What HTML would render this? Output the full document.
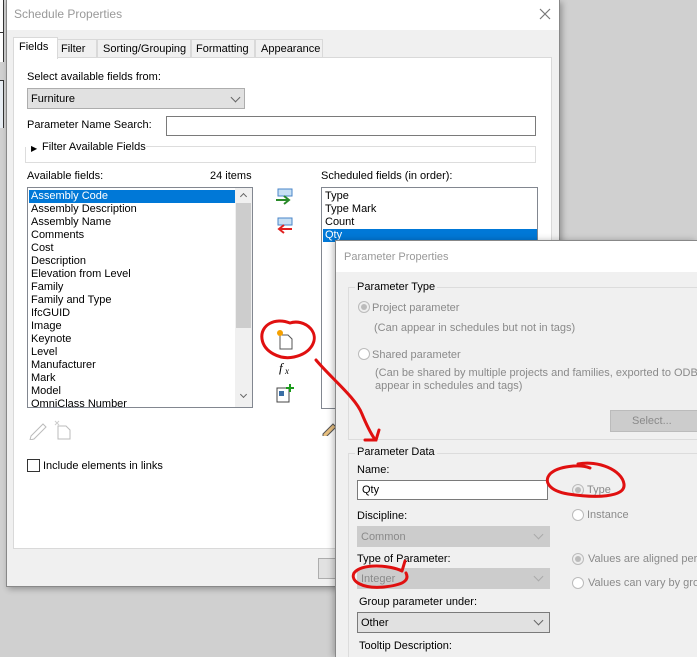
<!DOCTYPE html>
<html style="width:697px;height:657px;overflow:hidden"><head><meta charset="utf-8"><style>
*{box-sizing:border-box;margin:0;padding:0}
body{width:697px;height:657px;overflow:hidden;background:#d0d0d0;font-family:"Liberation Sans",sans-serif;font-size:11px;color:#000;position:relative}
.a{position:absolute}
.t{position:absolute;white-space:nowrap;line-height:13px}
.g{color:#8a8a8a}
.chev{position:absolute;width:7px;height:7px;border-right:1px solid #666;border-bottom:1px solid #666;transform:rotate(45deg)}
</style></head><body>
<div class="a" style="left:0;top:0;width:6px;height:657px;background:#d0d0d0"></div>
<div class="a" style="left:0;top:0;width:4px;height:32px;border-right:1px solid #333;background:#fff"></div>
<div class="a" style="left:0;top:32px;width:4px;height:30px;border-right:1px solid #333;border-top:1px solid #333;background:#fff"></div>
<div class="a" style="left:0;top:80px;width:4px;height:48px;border-right:1px solid #333;border-top:1px solid #333;background:#e8eef4"></div>
<div class="a" style="left:6px;top:0;width:554px;height:587px;background:#f0f0f0;border:1px solid #888;box-shadow:2px 2px 6px rgba(0,0,0,.3)"></div>
<div class="a" style="left:7px;top:0;width:552px;height:30px;background:#fff"></div>
<div class="t" style="left:14px;top:8px;font-size:12px;color:#999">Schedule Properties</div>
<svg class="a" style="left:539px;top:8px" width="12" height="12"><path d="M1 1l10 10M11 1L1 11" stroke="#777" stroke-width="1.2"/></svg>
<div class="a" style="left:13px;top:57px;width:539px;height:492px;background:#fff;border:1px solid #d9d9d9"></div>
<div class="a" style="left:57px;top:39px;width:40px;height:19px;border:1px solid #d9d9d9;background:#f0f0f0"></div>
<div class="t" style="left:61px;top:43px">Filter</div>
<div class="a" style="left:97px;top:39px;width:94px;height:19px;border:1px solid #d9d9d9;background:#f0f0f0"></div>
<div class="t" style="left:103px;top:43px">Sorting/Grouping</div>
<div class="a" style="left:191px;top:39px;width:64px;height:19px;border:1px solid #d9d9d9;background:#f0f0f0"></div>
<div class="t" style="left:196px;top:43px">Formatting</div>
<div class="a" style="left:255px;top:39px;width:68px;height:19px;border:1px solid #d9d9d9;background:#f0f0f0"></div>
<div class="t" style="left:261px;top:43px">Appearance</div>
<div class="a" style="left:13px;top:37px;width:45px;height:22px;border:1px solid #d9d9d9;border-bottom:none;background:#fff"></div>
<div class="t" style="left:19px;top:41px">Fields</div>
<div class="t" style="left:27px;top:71px">Select available fields from:</div>
<div class="a" style="left:27px;top:88px;width:218px;height:21px;background:#e1e1e1;border:1px solid #adadad"></div>
<div class="t" style="left:31px;top:93px">Furniture</div>
<div class="chev" style="left:232px;top:94px"></div>
<div class="t" style="left:27px;top:119px">Parameter Name Search:</div>
<div class="a" style="left:166px;top:116px;width:370px;height:20px;border:1px solid #7a7a7a;background:#fff"></div>
<div class="t" style="left:31px;top:142px;font-size:8px">▶</div>
<div class="t" style="left:42px;top:141px">Filter Available Fields</div>
<div class="a" style="left:146px;top:146px;width:390px;height:1px;background:#ddd"></div>
<div class="a" style="left:25px;top:147px;width:511px;height:16px;border:1px solid #ddd;border-top:none"></div>
<div class="t" style="left:27px;top:170px">Available fields:</div>
<div class="t" style="left:210px;top:170px">24 items</div>
<div class="a" style="left:27px;top:187px;width:226px;height:221px;border:1px solid #828790;background:#fff;overflow:hidden">
<div class="a" style="left:1px;top:2px;width:206px;height:13px;background:#0078d7"></div>
<div class="a" style="left:207px;top:0;width:17px;height:219px;background:#f0f0f0"></div>
<div class="a" style="left:208px;top:15px;width:15px;height:125px;background:#cdcdcd"></div>
<div class="chev" style="left:213px;top:6px;transform:rotate(225deg);width:5px;height:5px"></div>
<div class="chev" style="left:213px;top:204px;width:5px;height:5px"></div>
<div class="t" style="left:3px;top:2px;line-height:13px;color:#000"><span style="color:#fff">Assembly Code</span><br>Assembly Description<br>Assembly Name<br>Comments<br>Cost<br>Description<br>Elevation from Level<br>Family<br>Family and Type<br>IfcGUID<br>Image<br>Keynote<br>Level<br>Manufacturer<br>Mark<br>Model<br>OmniClass Number</div>
</div>
<div class="t" style="left:321px;top:170px">Scheduled fields (in order):</div>
<div class="a" style="left:321px;top:187px;width:217px;height:222px;border:1px solid #828790;background:#fff;overflow:hidden">
<div class="a" style="left:1px;top:41px;width:214px;height:13px;background:#0078d7"></div>
<div class="t" style="left:3px;top:2px"><span>Type</span><br>Type Mark<br>Count<br><span style="color:#fff">Qty</span></div>
</div>
<svg class="a" style="left:270px;top:185px" width="30" height="240" viewBox="0 0 30 240">
<rect x="8" y="4" width="14" height="7" fill="#c8e0f4" stroke="#4a86c8"/>
<path d="M6 15h12M14 11l5 4-5 4" stroke="#2a8a2a" stroke-width="2" fill="none"/>
<rect x="8" y="33" width="14" height="7" fill="#c8e0f4" stroke="#4a86c8"/>
<path d="M22 44h-12M14 40l-5 4 5 4" stroke="#e02020" stroke-width="2" fill="none"/>
<path d="M10 150h8l4 4v10h-12z" fill="#fff" stroke="#555"/>
<circle cx="10" cy="148" r="3" fill="#f5a000"/>
<text x="9" y="187" font-family="Liberation Serif" font-style="italic" font-size="13">f</text><text x="15" y="189" font-family="Liberation Serif" font-style="italic" font-size="9">x</text>
<rect x="7" y="203" width="12" height="14" fill="#fff" stroke="#444"/><rect x="9" y="206" width="5" height="5" fill="#3a6ea5"/>
<path d="M20 199v8M16 203h8" stroke="#1a9a1a" stroke-width="2"/>
</svg>
<svg class="a" style="left:27px;top:418px" width="50" height="22"><path d="M4 18l12-12 3 3-12 12-4 1z" fill="none" stroke="#bbb"/><path d="M31 8h8l4 4v9h-12z" fill="none" stroke="#bbb"/><path d="M28 3l4 4M32 3l-4 4" stroke="#ccc"/></svg>
<svg class="a" style="left:322px;top:420px" width="14" height="16"><path d="M1 14l10-10 3 3-10 10-3 1z" fill="#e8c080" stroke="#555"/></svg>
<div class="a" style="left:27px;top:459px;width:13px;height:13px;border:1px solid #333;background:#fff"></div>
<div class="t" style="left:43px;top:460px">Include elements in links</div>
<div class="a" style="left:318px;top:558px;width:20px;height:21px;border:1px solid #adadad;background:#e1e1e1"></div>
<div class="a" style="left:335px;top:240px;width:362px;height:417px;overflow:hidden;background:#f0f0f0;border-left:1px solid #888;border-top:1px solid #888;box-shadow:-2px 0 6px rgba(0,0,0,.25)">
<div class="a" style="left:12px;top:212px;width:400px;height:230px;border:1px solid #dcdcdc"></div>
<div class="a" style="left:12px;top:46px;width:400px;height:153px;border:1px solid #dcdcdc"></div>
</div>
<div class="a" style="left:336px;top:241px;width:361px;height:31px;background:#fff"></div>
<div class="t" style="left:344px;top:251px;color:#999">Parameter Properties</div>
<div class="t" style="left:355px;top:281px;background:#f0f0f0;padding:0 2px">Parameter Type</div>
<div class="a" style="left:358px;top:301px;width:12px;height:12px;border-radius:50%;border:1px solid #bbb;background:#eee"><div class="a" style="left:2px;top:2px;width:6px;height:6px;border-radius:50%;background:#bbb"></div></div>
<div class="t g" style="left:372px;top:302px">Project parameter</div>
<div class="t g" style="left:374px;top:322px">(Can appear in schedules but not in tags)</div>
<div class="a" style="left:358px;top:348px;width:12px;height:12px;border-radius:50%;border:1px solid #bbb;background:#fff"></div>
<div class="t g" style="left:372px;top:349px">Shared parameter</div>
<div class="t g" style="left:375px;top:367px">(Can be shared by multiple projects and families, exported to ODBC<br>appear in schedules and tags)</div>
<div class="a" style="left:610px;top:410px;width:90px;height:22px;border:1px solid #bbb;background:#ccc"></div>
<div class="t g" style="left:632px;top:415px">Select...</div>
<div class="t" style="left:355px;top:446px;background:#f0f0f0;padding:0 2px">Parameter Data</div>
<div class="t" style="left:357px;top:464px">Name:</div>
<div class="a" style="left:357px;top:480px;width:191px;height:20px;border:1px solid #7a7a7a;background:#fff"></div>
<div class="t" style="left:362px;top:484px">Qty</div>
<div class="a" style="left:572px;top:484px;width:12px;height:12px;border-radius:50%;border:1px solid #bbb;background:#eee"><div class="a" style="left:2px;top:2px;width:6px;height:6px;border-radius:50%;background:#bbb"></div></div>
<div class="t g" style="left:587px;top:484px">Type</div>
<div class="a" style="left:572px;top:509px;width:12px;height:12px;border-radius:50%;border:1px solid #bbb;background:#fff"></div>
<div class="t g" style="left:587px;top:509px">Instance</div>
<div class="t" style="left:357px;top:510px">Discipline:</div>
<div class="a" style="left:357px;top:526px;width:193px;height:21px;border:1px solid #ccc;background:#ccc"></div>
<div class="t g" style="left:361px;top:531px">Common</div>
<div class="chev" style="left:535px;top:531px;border-color:#aaa"></div>
<div class="t" style="left:357px;top:553px">Type of Parameter:</div>
<div class="a" style="left:357px;top:568px;width:193px;height:21px;border:1px solid #ccc;background:#ccc"></div>
<div class="t g" style="left:361px;top:573px">Integer</div>
<div class="chev" style="left:535px;top:573px;border-color:#aaa"></div>
<div class="a" style="left:572px;top:553px;width:12px;height:12px;border-radius:50%;border:1px solid #bbb;background:#eee"><div class="a" style="left:2px;top:2px;width:6px;height:6px;border-radius:50%;background:#bbb"></div></div>
<div class="t g" style="left:588px;top:553px">Values are aligned per g</div>
<div class="a" style="left:572px;top:577px;width:12px;height:12px;border-radius:50%;border:1px solid #bbb;background:#fff"></div>
<div class="t g" style="left:588px;top:577px">Values can vary by gro</div>
<div class="t" style="left:359px;top:596px">Group parameter under:</div>
<div class="a" style="left:357px;top:612px;width:193px;height:21px;border:1px solid #7a7a7a;background:#e1e1e1"></div>
<div class="t" style="left:361px;top:617px">Other</div>
<div class="chev" style="left:535px;top:617px"></div>
<div class="t" style="left:359px;top:640px">Tooltip Description:</div>
<svg class="a" style="left:0;top:0" width="697" height="657" fill="none" stroke="#e01010" stroke-width="3" stroke-linecap="round">
<path d="M290 323c-15-6-30 2-28 16 2 13 18 21 32 18 18-4 25-18 17-28-6-7-15-8-21-6"/>
<path d="M316 360c15 18 40 38 46 54 5 12 8 18 12 24"/>
<path d="M365 440l11 0 3-10"/>
<path d="M578 464c20-4 44 6 46 20 2 14-30 14-56 10-18-3-25-12-18-20 8-8 30-10 40-6"/>
<path d="M402 571c-12-6-40-8-48 2-4 8 8 16 30 14 18-2 26-6 22-14M402 571l3-10"/>
</svg>
</body></html>
